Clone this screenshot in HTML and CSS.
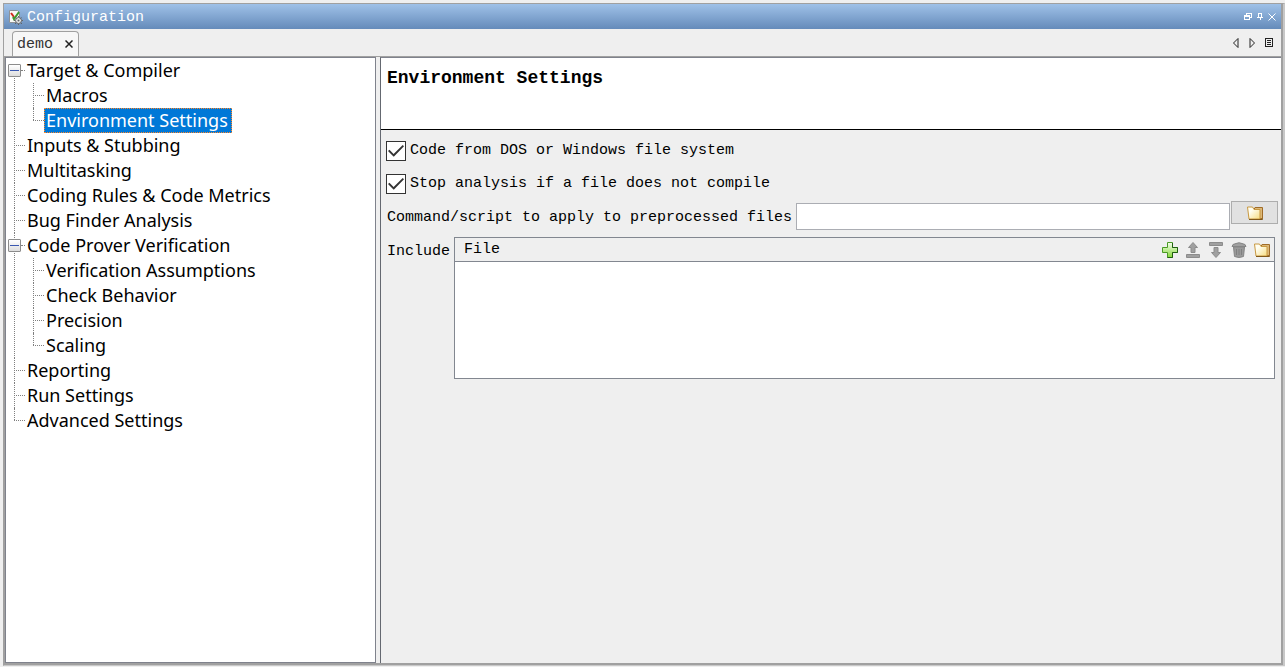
FILE: index.html
```html
<!DOCTYPE html>
<html lang="en">
  <head>
    <meta charset="utf-8" />
    <title>Configuration</title>
    <link rel="stylesheet" href="styles.css">
  </head>
  <body>
    <!-- shared icon -->
    <svg class="defs" width="0" height="0" aria-hidden="true">
      <defs>
        <linearGradient id="paper" x1="0" y1="0" x2="1" y2="1">
          <stop offset="0.3" stop-color="#fffef2" />
          <stop offset="1" stop-color="#f6dc80" />
        </linearGradient>
        <linearGradient id="green" x1="0" y1="0" x2="0" y2="1">
          <stop offset="0" stop-color="#f6fff0" />
          <stop offset="1" stop-color="#86d838" />
        </linearGradient>
        <symbol id="folder" viewBox="0 0 16 14">
          <path d="M7 3.500l1-2h7.500v11H13" fill="#dcb878" stroke="#a06c28" />
          <path d="M.5 1h5l1.500 2.500h6v9.500H2z" fill="url(#paper)" stroke="#c89840" />
          <path d="M2 13.500h13.500v-1" fill="none" stroke="#80581a" />
        </symbol>
      </defs>
    </svg>

    <div class="window">
      <header class="titlebar">
        <svg class="app-icon" width="14" height="16" viewBox="0 0 14 16">
          <path d="M.5 1.500h8l2 2v10h-10z" fill="#f8f8f4" stroke="#8d9298" />
          <path d="M2 4l3 4" stroke="#d22a1c" stroke-width="2" />
          <path d="M4 8l1 2 5-7" fill="none" stroke="#3c9a2c" stroke-width="2" />
          <circle cx="9.500" cy="11.500" r="3" fill="#e4e4e4" stroke="#606468" />
          <circle cx="9.500" cy="11.500" r="1" fill="#606468" />
          <path d="M9.500 7v1M9.500 15v1M5 11.500h1M13 11.500h1M6.500 8.500l1 1M12 14l1 1M12.500 8.500l-1 1M7 14l-1 1" stroke="#606468" />
        </svg>
        <h1>Configuration</h1>
        <div class="window-buttons">
          <button aria-label="Restore">
            <svg width="8" height="8" viewBox="0 0 8 8" shape-rendering="crispEdges">
              <path d="M2 2.500V.5h5.500v4H6M.5 3.500h5v3h-5zM0 2.500h6" />
            </svg>
          </button>
          <button aria-label="Pin">
            <svg width="8" height="8" viewBox="0 0 8 8" shape-rendering="crispEdges">
              <path d="M2.500 4V.5h3V4M1 4.500h6M4.500 4v3" />
            </svg>
          </button>
          <button aria-label="Close">
            <svg width="8" height="8" viewBox="0 0 8 8">
              <path d="M.5.5l7 7M7.500.5l-7 7" />
            </svg>
          </button>
        </div>
      </header>

      <nav class="tabbar">
        <div class="tab">
          <a href="#demo">demo</a>
          <button aria-label="Close demo">
            <svg width="8" height="8" viewBox="0 0 8 8">
              <path d="M.5.5l7 7M7.500.5l-7 7" stroke="#222" stroke-width="1.500" />
            </svg>
          </button>
        </div>
        <div class="tab-tools">
          <button aria-label="Previous tab">
            <svg width="6" height="10" viewBox="0 0 6 10"><path d="M5 .5v9L.5 5z" /></svg>
          </button>
          <button aria-label="Next tab">
            <svg width="6" height="10" viewBox="0 0 6 10"><path d="M1 .5v9L5.500 5z" /></svg>
          </button>
          <button aria-label="List of tabs">
            <svg width="8" height="9" viewBox="0 0 8 9" shape-rendering="crispEdges">
              <path d="M.5.5h7v8h-7zM2 2.500h4M2 4.500h4M2 6.500h4" />
            </svg>
          </button>
        </div>
      </nav>

      <div class="content">
        <aside class="sidebar">
          <ul class="tree">
            <li>
              <div class="node">
                <button class="toggle" aria-label="Collapse"></button>
                <a href="#target">Target &amp; Compiler</a>
              </div>
              <ul>
                <li><div class="node"><a href="#macros">Macros</a></div></li>
                <li><div class="node"><a class="selected" href="#environment">Environment Settings</a></div></li>
              </ul>
            </li>
            <li><div class="node"><a href="#inputs">Inputs &amp; Stubbing</a></div></li>
            <li><div class="node"><a href="#multitasking">Multitasking</a></div></li>
            <li><div class="node"><a href="#rules">Coding Rules &amp; Code Metrics</a></div></li>
            <li><div class="node"><a href="#bugs">Bug Finder Analysis</a></div></li>
            <li>
              <div class="node">
                <button class="toggle" aria-label="Collapse"></button>
                <a href="#prover">Code Prover Verification</a>
              </div>
              <ul>
                <li><div class="node"><a href="#assumptions">Verification Assumptions</a></div></li>
                <li><div class="node"><a href="#behavior">Check Behavior</a></div></li>
                <li><div class="node"><a href="#precision">Precision</a></div></li>
                <li><div class="node"><a href="#scaling">Scaling</a></div></li>
              </ul>
            </li>
            <li><div class="node"><a href="#reporting">Reporting</a></div></li>
            <li><div class="node"><a href="#run">Run Settings</a></div></li>
            <li><div class="node"><a href="#advanced">Advanced Settings</a></div></li>
          </ul>
        </aside>

        <main class="panel">
          <div class="panel-header">
            <h2>Environment Settings</h2>
          </div>
          <form class="settings">
            <label class="check">
              <input type="checkbox" checked />
              Code from DOS or Windows file system
            </label>
            <label class="check">
              <input type="checkbox" checked />
              Stop analysis if a file does not compile
            </label>
            <div class="field">
              <label for="command">Command/script to apply to preprocessed files</label>
              <input type="text" id="command" />
              <button type="button" class="browse" aria-label="Browse">
                <svg width="16" height="14"><use href="#folder" /></svg>
              </button>
            </div>
            <div class="field">
              <span id="includeLabel">Include</span>
              <div class="file-list" role="group" aria-labelledby="includeLabel">
                <div class="file-header">
                  <span>File</span>
                  <div class="file-tools">
                    <button type="button" aria-label="Add">
                      <svg width="16" height="16" viewBox="0 0 16 16">
                        <path d="M5.500.5h5v5h5v5h-5v5h-5v-5h-5v-5h5z" fill="url(#green)" stroke="#4a9a24" />
                        <path d="M10.500 1v4.500h5v5h-5v5h-5" fill="none" stroke="#1f5f10" />
                      </svg>
                    </button>
                    <button type="button" aria-label="Move up" disabled>
                      <svg width="16" height="16" viewBox="0 0 16 16">
                        <path d="M8 .5l4.500 5h-2.500v5h-4v-5H3.500zM1.500 12.500h13v3h-13z" fill="#a0a0a0" stroke="#8c8c8c" />
                      </svg>
                    </button>
                    <button type="button" aria-label="Move down" disabled>
                      <svg width="16" height="16" viewBox="0 0 16 16">
                        <path d="M8 15.500l4.500-5h-2.500v-5h-4v5H3.500zM1.500.5h13v3h-13z" fill="#a0a0a0" stroke="#8c8c8c" />
                      </svg>
                    </button>
                    <button type="button" aria-label="Delete" disabled>
                      <svg width="16" height="16" viewBox="0 0 16 16">
                        <path d="M2.500 5h11l-1 9.500q-4.500 2-9 0z" fill="#999" stroke="#858585" />
                        <path d="M1 4.500Q1 2 5 1.500q3-1.500 6 0 4 .5 4 3z" fill="#a0a0a0" stroke="#858585" />
                        <path d="M5.500 7v6M8 7v6M10.500 7v6" stroke="#808080" />
                      </svg>
                    </button>
                    <button type="button" aria-label="Open folder">
                      <svg width="16" height="14"><use href="#folder" /></svg>
                    </button>
                  </div>
                </div>
                <div class="file-body"></div>
              </div>
            </div>
          </form>
        </main>
      </div>
    </div>
  </body>
</html>
```

FILE: styles.css
```css
* {
  box-sizing: border-box;
}
body {
  margin: 0;
  height: 100vh;
  padding: 3px 0 1px 3px;
  background: #efefef;
  font-family: "Liberation Mono", "Noto Sans CJK SC", monospace;
  font-size: 15px;
  color: #000;
}
h1,
h2,
ul {
  margin: 0;
  padding: 0;
}
a {
  color: inherit;
  text-decoration: none;
}
button {
  display: flex;
  align-items: center;
  justify-content: center;
  padding: 0;
  border: none;
  background: none;
}
.defs {
  position: absolute;
}

/* window frame */
.window {
  display: flex;
  flex-direction: column;
  height: 100%;
  border: 1px solid #a0a0a0;
  border-right: 2px solid #c8c8c8;
  border-bottom: 1px solid #c8c8c8;
}
.titlebar {
  display: flex;
  align-items: center;
  height: 25px;
  padding: 0 5px;
  background: linear-gradient(#9fc1e8, #658bba);
  border-right: 2px solid #a0a0a0;
}
.titlebar h1 {
  flex: 1;
  margin-left: 4px;
  font-size: 15px;
  font-weight: normal;
  line-height: 25px;
  padding-top: 2px;
  color: #fff;
}
.window-buttons {
  display: flex;
  gap: 4px;
}
.window-buttons path {
  fill: none;
  stroke: #fff;
}

/* tabs */
.tabbar {
  display: flex;
  justify-content: space-between;
  height: 27px;
  padding: 2px 8px 0 8px;
  border-right: 2px solid #a0a0a0;
}
.tab {
  display: flex;
  align-items: center;
  gap: 12px;
  padding: 0 5px 0 4px;
  background: #f7f7f7;
  border: 1px solid #a0a0a0;
  border-bottom: none;
  border-radius: 4px 4px 0 0;
  color: #333;
}
.tab-tools {
  display: flex;
  align-items: center;
  gap: 10px;
  padding-bottom: 2px;
}
.tab-tools path {
  fill: none;
  stroke: #222;
}

.content {
  display: flex;
  flex: 1;
  min-height: 0;
  gap: 4px;
  border: 2px solid #a0a0a0;
  border-top-width: 1px;
  border-left-width: 1px;
}

/* options tree */
.sidebar {
  flex: 0 0 371px;
  background: #fff;
  border: 1px solid #7f828c;
  overflow: auto;
}
.tree {
  font-family: "Noto Sans", sans-serif;
  font-size: 18px;
}
.tree ul {
  padding-left: 19px;
}
.tree li {
  position: relative;
  list-style: none;
}
.tree li::before {
  content: "";
  position: absolute;
  left: 8px;
  top: 0;
  bottom: 0;
  border-left: 1px dotted #808080;
}
.tree > li:first-child::before {
  top: 12px;
}
.tree li:last-child::before {
  bottom: auto;
  height: 12px;
}
.node {
  display: flex;
  align-items: center;
  position: relative;
  height: 25px;
  padding-left: 2px;
}
.node::before {
  content: "";
  width: 11px;
  margin-left: 6px;
  border-top: 1px dotted #808080;
}
.node .toggle {
  width: 13px;
  height: 13px;
  background: linear-gradient(#fff, #ddd);
  border: 1px solid #8c8c8c;
  border-radius: 1px;
}
.node .toggle::before {
  content: "";
  width: 9px;
  border-top: 1px solid #3a58b0;
}
.node:has(.toggle)::before {
  order: 1;
  width: 4px;
  margin-left: 0;
}
.node:has(.toggle) a {
  order: 2;
}
.node a {
  height: 25px;
  padding: 0 4px 0 2px;
  line-height: 25px;
  white-space: nowrap;
}
.node a.selected {
  background: #0078d7;
  outline: 1px dotted #ff8728;
  outline-offset: -1px;
  color: #fff;
}

/* settings panel */
.panel {
  flex: 1;
  min-width: 0;
  border-top: 1px solid #7f828c;
  border-left: 1px solid #646870;
}
.panel-header {
  height: 72px;
  padding: 10px 6px;
  background: #fff;
  border-bottom: 1px solid #000;
}
.panel-header h2 {
  font-size: 18px;
  line-height: 20px;
}
.settings {
  display: flex;
  flex-direction: column;
  gap: 5px;
  padding: 7px 3px 0 6px;
  line-height: 29px;
}
.check {
  display: flex;
  align-items: center;
  gap: 4px;
  height: 28px;
  line-height: 30px;
}
.check input {
  appearance: none;
  width: 20px;
  height: 20px;
  margin: 0 0 0 -1px;
  display: grid;
  place-items: center;
  background: #fff;
  border: 1px solid #333;
}
.check input:checked::before {
  content: "";
  width: 16px;
  height: 12px;
  background: #333;
  clip-path: polygon(0 50%, 9% 40%, 35% 75%, 92% 0, 100% 10%, 36% 97%);
}
.field {
  display: flex;
  align-items: flex-start;
  gap: 4px;
  min-height: 29px;
}
.field label {
  white-space: nowrap;
}
.field input {
  flex: 1;
  min-width: 0;
  height: 27px;
  border: 1px solid #abadb3;
  font: inherit;
}
.browse {
  width: 47px;
  height: 23px;
  margin: -2px 0 0 -3px;
  background: #e1e1e1;
  border: 1px solid #adadad;
}
.file-list {
  flex: 1;
  margin-right: 3px;
  background: #fff;
  border: 1px solid #828790;
}
.file-header {
  display: flex;
  justify-content: space-between;
  align-items: center;
  height: 24px;
  padding: 0 4px 0 9px;
  background: #efefef;
  border-bottom: 1px solid #828790;
}
.file-tools {
  display: flex;
  align-items: center;
  gap: 7px;
}
.file-body {
  height: 116px;
}
```
